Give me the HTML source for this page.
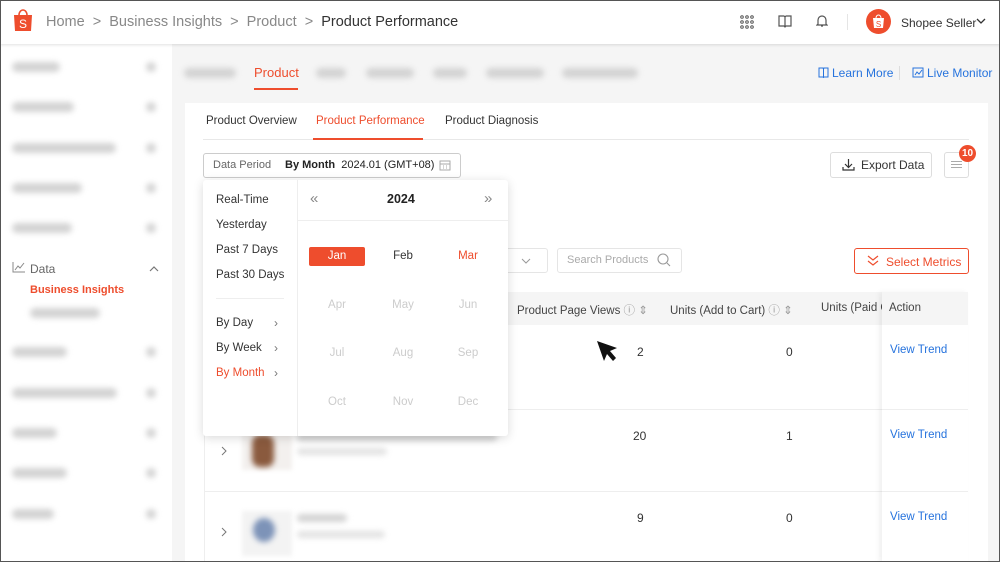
<!DOCTYPE html>
<html><head><meta charset="utf-8"><style>
*{box-sizing:border-box;margin:0;padding:0}
body{width:1000px;height:562px;overflow:hidden;font-family:"Liberation Sans",Arial,sans-serif;background:#f5f5f5;position:relative;color:#333}
.a{position:absolute}
.blur{filter:blur(3px);background:#d3d3d3;border-radius:6px;height:10px}
.t{white-space:nowrap}
</style></head><body>
<div class="a" style="left:0;top:0;width:1000px;height:562px;border:1px solid #555;z-index:50;pointer-events:none"></div>
<!-- header -->
<div class="a" style="left:0;top:0;width:1000px;height:44px;background:#fff;box-shadow:0 1px 3px rgba(0,0,0,.12);z-index:5">
 <svg class="a" style="left:12px;top:8px" width="22" height="24" viewBox="0 0 22 24"><path d="M2 7h18l-1 16H3z" fill="#ee4d2d"/><path d="M7 7a4 5 0 0 1 8 0" stroke="#ee4d2d" stroke-width="1.6" fill="none"/><text x="11" y="20" fill="#fff" font-size="12" text-anchor="middle" font-family="Liberation Sans">S</text></svg>
 <div class="a t" style="left:46px;top:14px;font-size:14.5px;color:#888">Home&nbsp;&nbsp;&gt;&nbsp;&nbsp;Business Insights&nbsp;&nbsp;&gt;&nbsp;&nbsp;Product&nbsp;&nbsp;&gt;&nbsp;&nbsp;<span style="color:#333">Product Performance</span></div>
 <svg class="a" style="left:740px;top:15px" width="14" height="14"><g fill="none" stroke="#555" stroke-width="1"><circle cx="2" cy="2" r="1.3"/><circle cx="7" cy="2" r="1.3"/><circle cx="12" cy="2" r="1.3"/><circle cx="2" cy="7" r="1.3"/><circle cx="7" cy="7" r="1.3"/><circle cx="12" cy="7" r="1.3"/><circle cx="2" cy="12" r="1.3"/><circle cx="7" cy="12" r="1.3"/><circle cx="12" cy="12" r="1.3"/></g></svg>
 <svg class="a" style="left:778px;top:15px" width="14" height="13"><path d="M1 1h5l1 1 1-1h5v10H8l-1 1-1-1H1z M7 2v10" fill="none" stroke="#555" stroke-width="1.2"/></svg>
 <svg class="a" style="left:816px;top:14px" width="12" height="14"><path d="M2 10V6a4 4 0 0 1 8 0v4l1 1H1z M5 12h2" fill="none" stroke="#555" stroke-width="1.2"/></svg>
 <div class="a" style="left:847px;top:14px;width:1px;height:16px;background:#e5e5e5"></div>
 <div class="a" style="left:866px;top:9px;width:25px;height:25px;border-radius:50%;background:#ee4d2d"></div>
 <svg class="a" style="left:871px;top:13px" width="15" height="16"><path d="M2 5h11l-1 10H3z" fill="#fff"/><path d="M5 5a2.5 3 0 0 1 5 0" stroke="#fff" fill="none"/><text x="7.5" y="14" font-size="8" fill="#ee4d2d" text-anchor="middle">S</text></svg>
 <div class="a t" style="left:901px;top:16px;font-size:12px;color:#333">Shopee Seller</div>
 <svg class="a" style="left:976px;top:18px" width="10" height="7"><path d="M1 1l4 4 4-4" fill="none" stroke="#333" stroke-width="1.3"/></svg>
</div>
<!-- sidebar -->
<div class="a" style="left:0;top:44px;width:172px;height:518px;background:#fff">
 <div class="a blur" style="left:12px;top:18px;width:48px"></div><div class="a blur" style="left:146px;top:18px;width:10px"></div>
 <div class="a blur" style="left:12px;top:58px;width:62px"></div><div class="a blur" style="left:146px;top:58px;width:10px"></div>
 <div class="a blur" style="left:12px;top:99px;width:104px"></div><div class="a blur" style="left:146px;top:99px;width:10px"></div>
 <div class="a blur" style="left:12px;top:139px;width:70px"></div><div class="a blur" style="left:146px;top:139px;width:10px"></div>
 <div class="a blur" style="left:12px;top:179px;width:60px"></div><div class="a blur" style="left:146px;top:179px;width:10px"></div>
 <svg class="a" style="left:12px;top:218px" width="13" height="11"><path d="M1 0v10h12 M3 8l3-4 2 2 4-5" fill="none" stroke="#888" stroke-width="1"/></svg>
 <div class="a t" style="left:30px;top:218px;font-size:12px;color:#666">Data</div>
 <svg class="a" style="left:149px;top:221px" width="10" height="7"><path d="M1 6l4-4 4 4" fill="none" stroke="#777" stroke-width="1.2"/></svg>
 <div class="a t" style="left:30px;top:240px;font-size:11px;color:#ee4d2d;font-weight:bold">Business Insights</div>
 <div class="a blur" style="left:30px;top:264px;width:70px"></div>
 <div class="a blur" style="left:12px;top:303px;width:55px"></div><div class="a blur" style="left:146px;top:303px;width:10px"></div>
 <div class="a blur" style="left:12px;top:344px;width:105px"></div><div class="a blur" style="left:146px;top:344px;width:10px"></div>
 <div class="a blur" style="left:12px;top:384px;width:45px"></div><div class="a blur" style="left:146px;top:384px;width:10px"></div>
 <div class="a blur" style="left:12px;top:424px;width:55px"></div><div class="a blur" style="left:146px;top:424px;width:10px"></div>
 <div class="a blur" style="left:12px;top:465px;width:42px"></div><div class="a blur" style="left:146px;top:465px;width:10px"></div>
</div>
<!-- top tabs -->
<div class="a blur" style="left:184px;top:68px;width:52px"></div>
<div class="a t" style="left:254px;top:65px;font-size:13px;color:#ee4d2d">Product</div>
<div class="a" style="left:254px;top:88px;width:44px;height:2px;background:#ee4d2d"></div>
<div class="a blur" style="left:316px;top:68px;width:30px"></div>
<div class="a blur" style="left:366px;top:68px;width:48px"></div>
<div class="a blur" style="left:433px;top:68px;width:34px"></div>
<div class="a blur" style="left:486px;top:68px;width:58px"></div>
<div class="a blur" style="left:562px;top:68px;width:76px"></div>
<svg class="a" style="left:818px;top:67px" width="11" height="11"><path d="M1 1h4l.5 1 .5-1h4v9H6l-.5.5L5 10H1z M5.5 2v8" fill="none" stroke="#2673dd" stroke-width="1"/></svg>
<div class="a t" style="left:832px;top:66px;font-size:12px;color:#2673dd">Learn More</div>
<div class="a" style="left:899px;top:66px;width:1px;height:14px;background:#ddd"></div>
<svg class="a" style="left:912px;top:67px" width="12" height="11"><path d="M1 1h10v9H1z M3 8l2-3 2 2 3-4" fill="none" stroke="#2673dd" stroke-width="1"/></svg>
<div class="a t" style="left:927px;top:66px;font-size:12px;color:#2673dd">Live Monitor</div>
<!-- card -->
<div class="a" style="left:185px;top:103px;width:803px;height:459px;background:#fff">
 <div class="a t" style="left:21px;top:12px;font-size:11.5px;color:#333">Product Overview</div>
 <div class="a t" style="left:131px;top:12px;font-size:11.5px;color:#ee4d2d">Product Performance</div>
 <div class="a t" style="left:260px;top:12px;font-size:11.5px;color:#333">Product Diagnosis</div>
 <div class="a" style="left:18px;top:36px;width:766px;height:1px;background:#e8e8e8"></div>
 <div class="a" style="left:128px;top:35px;width:110px;height:2px;background:#ee4d2d"></div>
 <div class="a" style="left:18px;top:50px;width:258px;height:25px;border:1px solid #ccc;border-radius:3px"></div>
 <div class="a t" style="left:28px;top:56px;font-size:11px;color:#666">Data Period</div>
 <div class="a t" style="left:100px;top:56px;font-size:11px;color:#222"><b>By Month</b>&nbsp;&nbsp;2024.01 (GMT+08)</div>
 <svg class="a" style="left:254px;top:56px" width="12" height="12"><path d="M1 2h10v9H1z M1 5h10 M4 7h1 M7 7h1 M4 9h1 M7 9h1" fill="none" stroke="#aaa" stroke-width="1"/></svg>
 <div class="a" style="left:645px;top:49px;width:102px;height:26px;border:1px solid #ddd;border-radius:3px"></div>
 <svg class="a" style="left:657px;top:55px" width="13" height="13"><path d="M6.5 1v8 M3 6l3.5 3.5L10 6 M1 9v3h11V9" fill="none" stroke="#333" stroke-width="1.2"/></svg>
 <div class="a t" style="left:676px;top:55px;font-size:12px;color:#333">Export Data</div>
 <div class="a" style="left:759px;top:49px;width:25px;height:26px;border:1px solid #ddd;border-radius:3px"></div>
 <div class="a" style="left:766px;top:58px;width:11px;height:1px;background:#aaa;box-shadow:0 3px #aaa,0 6px #aaa"></div>
 <div class="a" style="left:774px;top:42px;width:17px;height:17px;border-radius:50%;background:#ee4d2d;color:#fff;font-size:10px;text-align:center;line-height:17px;font-weight:bold">10</div>
 <!-- filter row -->
 <div class="a" style="left:300px;top:145px;width:63px;height:25px;border:1px solid #e5e5e5;border-radius:3px"></div>
 <svg class="a" style="left:336px;top:155px" width="10" height="6"><path d="M1 1l4 4 4-4" fill="none" stroke="#999"/></svg>
 <div class="a" style="left:372px;top:145px;width:125px;height:25px;border:1px solid #e5e5e5;border-radius:3px"></div>
 <div class="a t" style="left:382px;top:151px;font-size:11px;color:#aaa">Search Products</div>
 <svg class="a" style="left:472px;top:150px" width="14" height="14"><circle cx="6" cy="6" r="5" fill="none" stroke="#999" stroke-width="1.1"/><path d="M10 10l3 3" stroke="#999" stroke-width="1.1"/></svg>
 <div class="a" style="left:669px;top:145px;width:115px;height:26px;border:1px solid #ee4d2d;border-radius:3px"></div>
 <svg class="a" style="left:682px;top:152px" width="12" height="11"><path d="M1 1l5 4 5-4 M1 6l5 4 5-4" fill="none" stroke="#ee4d2d" stroke-width="1.2"/></svg>
 <div class="a t" style="left:701px;top:152px;font-size:12px;color:#ee4d2d">Select Metrics</div>
 <!-- table -->
 <div class="a" style="left:19px;top:189px;width:764px;height:33px;background:#f5f5f5"></div>
 <div class="a t" style="left:332px;top:199px;font-size:11.5px;color:#444">Product Page Views <span style="color:#999">ⓘ ⇕</span></div>
 <div class="a t" style="left:485px;top:199px;font-size:11.5px;color:#444">Units (Add to Cart) <span style="color:#999">ⓘ ⇕</span></div>
 <div class="a t" style="left:636px;top:199px;font-size:11.5px;color:#444">Units (Paid O</div>
 <div class="a" style="left:19px;top:306px;width:764px;height:1px;background:#eee"></div>
 <div class="a" style="left:19px;top:388px;width:764px;height:1px;background:#eee"></div>
 <div class="a" style="left:19px;top:189px;width:1px;height:270px;background:#eee"></div>
 <div class="a t" style="left:452px;top:242px;font-size:12px;color:#333">2</div>
 <div class="a t" style="left:601px;top:242px;font-size:12px;color:#333">0</div>
 <div class="a t" style="left:448px;top:326px;font-size:12px;color:#333">20</div>
 <div class="a t" style="left:601px;top:326px;font-size:12px;color:#333">1</div>
 <div class="a t" style="left:452px;top:408px;font-size:12px;color:#333">9</div>
 <div class="a t" style="left:601px;top:408px;font-size:12px;color:#333">0</div>
 <svg class="a" style="left:35px;top:343px" width="8" height="10"><path d="M2 1l4 4-4 4" fill="none" stroke="#777"/></svg>
 <svg class="a" style="left:35px;top:424px" width="8" height="10"><path d="M2 1l4 4-4 4" fill="none" stroke="#777"/></svg>
 <div class="a" style="left:57px;top:327px;width:50px;height:40px;background:#f3f0ee;filter:blur(2px)"></div>
 <div class="a" style="left:67px;top:332px;width:22px;height:32px;background:#8a5a3e;border-radius:8px;filter:blur(3px)"></div>
 <div class="a blur" style="left:112px;top:330px;width:200px;height:8px"></div>
 <div class="a blur" style="left:112px;top:345px;width:90px;height:7px;background:#e2e2e2"></div>
 <div class="a" style="left:57px;top:408px;width:50px;height:45px;background:#f3f3f3;filter:blur(2px)"></div>
 <div class="a" style="left:68px;top:415px;width:22px;height:24px;background:#7d93b8;border-radius:50%;filter:blur(3px)"></div>
 <div class="a blur" style="left:112px;top:411px;width:50px;height:8px"></div>
 <div class="a blur" style="left:112px;top:428px;width:88px;height:7px;background:#e2e2e2"></div>
 <!-- action column -->
 <div class="a" style="left:697px;top:189px;width:86px;height:270px;background:#fff;box-shadow:-3px 0 5px rgba(0,0,0,.06)"></div>
 <div class="a" style="left:697px;top:189px;width:86px;height:33px;background:#f5f5f5"></div>
 <div class="a t" style="left:704px;top:199px;font-size:11.5px;color:#444">Action</div>
 <div class="a" style="left:697px;top:306px;width:86px;height:1px;background:#eee"></div>
 <div class="a" style="left:697px;top:388px;width:86px;height:1px;background:#eee"></div>
 <div class="a t" style="left:705px;top:241px;font-size:11.5px;color:#2673dd">View Trend</div>
 <div class="a t" style="left:705px;top:326px;font-size:11.5px;color:#2673dd">View Trend</div>
 <div class="a t" style="left:705px;top:408px;font-size:11.5px;color:#2673dd">View Trend</div>
</div>
<!-- cursor -->
<svg class="a" style="left:596px;top:340px;z-index:10" width="24" height="24"><path d="M1 1l20 7-7 3 6 7-3 3-6-7-3 7z" fill="#111"/></svg>
<!-- popover -->
<div class="a" style="left:203px;top:180px;width:305px;height:256px;background:#fff;border-radius:3px;box-shadow:0 2px 10px rgba(0,0,0,.15);z-index:8">
 <div class="a" style="left:94px;top:0;width:1px;height:256px;background:#eee"></div>
 <div class="a t" style="left:13px;top:8px;font-size:11.5px;color:#333;line-height:25px">Real-Time<br>Yesterday<br>Past 7 Days<br>Past 30 Days</div>
 <div class="a" style="left:13px;top:118px;width:68px;height:1px;background:#eee"></div>
 <div class="a t" style="left:13px;top:131px;font-size:11.5px;color:#333;line-height:25px">By Day<br>By Week<br><span style="color:#ee4d2d">By Month</span></div>
 <div class="a t" style="left:71px;top:131px;font-size:12px;color:#777;line-height:25px">›<br>›<br>›</div>
 <div class="a t" style="left:107px;top:10px;font-size:15px;color:#888">«</div>
 <div class="a t" style="left:184px;top:12px;font-size:12.5px;color:#222;font-weight:bold">2024</div>
 <div class="a t" style="left:281px;top:10px;font-size:15px;color:#888">»</div>
 <div class="a" style="left:95px;top:40px;width:210px;height:1px;background:#eee"></div>
 <div class="a" style="left:106px;top:67px;width:56px;height:19px;background:#ee4d2d;border-radius:2px"></div>
 <div class="a t" style="left:106px;top:70px;width:56px;text-align:center;font-size:11.5px;color:#fff">Jan</div>
 <div class="a t" style="left:172px;top:70px;width:56px;text-align:center;font-size:11.5px;color:#333">Feb</div>
 <div class="a t" style="left:237px;top:70px;width:56px;text-align:center;font-size:11.5px;color:#ee4d2d">Mar</div>
 <div class="a t" style="left:106px;top:119px;width:56px;text-align:center;font-size:11.5px;color:#ccc">Apr</div>
 <div class="a t" style="left:172px;top:119px;width:56px;text-align:center;font-size:11.5px;color:#ccc">May</div>
 <div class="a t" style="left:237px;top:119px;width:56px;text-align:center;font-size:11.5px;color:#ccc">Jun</div>
 <div class="a t" style="left:106px;top:167px;width:56px;text-align:center;font-size:11.5px;color:#ccc">Jul</div>
 <div class="a t" style="left:172px;top:167px;width:56px;text-align:center;font-size:11.5px;color:#ccc">Aug</div>
 <div class="a t" style="left:237px;top:167px;width:56px;text-align:center;font-size:11.5px;color:#ccc">Sep</div>
 <div class="a t" style="left:106px;top:216px;width:56px;text-align:center;font-size:11.5px;color:#ccc">Oct</div>
 <div class="a t" style="left:172px;top:216px;width:56px;text-align:center;font-size:11.5px;color:#ccc">Nov</div>
 <div class="a t" style="left:237px;top:216px;width:56px;text-align:center;font-size:11.5px;color:#ccc">Dec</div>
</div>
</body></html>
